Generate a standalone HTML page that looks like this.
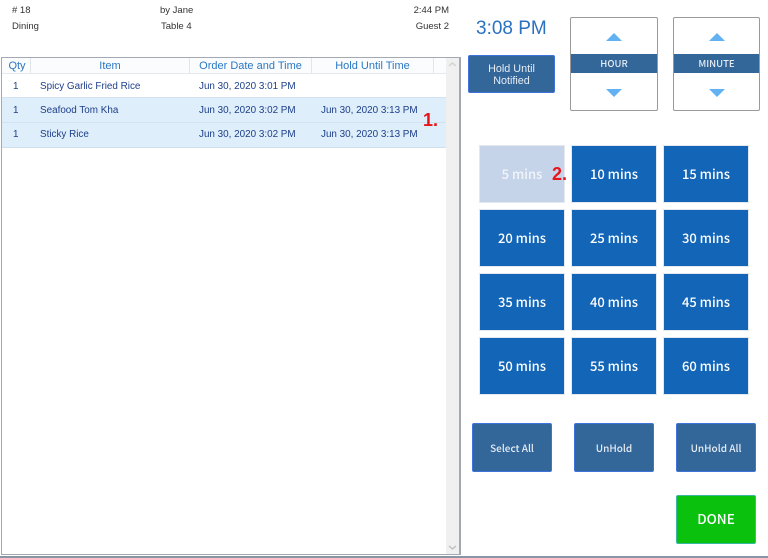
<!DOCTYPE html>
<html><head><meta charset="utf-8"><style>
html,body{margin:0;padding:0;width:768px;height:558px;overflow:hidden;background:#fff}
body{position:relative;font-family:"Liberation Sans",sans-serif}
.a{position:absolute;white-space:nowrap}
.t{font-size:9.5px;color:#333;line-height:12px}
.h{font-size:11px;color:#2a78c4;line-height:14px;top:59px;text-align:center}
.c{font-size:9.9px;color:#1d3f8a;line-height:12px}
.sep{position:absolute;top:58px;width:1px;height:15px;background:#e2e6ea}
.b{position:absolute;box-sizing:border-box;display:flex;align-items:center;justify-content:center;text-align:center}
.m{width:84px;height:56px;background:#1265b7;color:#fff;font:500 13px/1 "Noto Sans CJK JP","Liberation Sans",sans-serif;box-shadow:0 0 0 1px #e3e8ef;padding-bottom:2px}
.s{background:#336699;border:1px solid #3f73dc;border-radius:2px;color:#e6edf5}
.g{font:500 10px/1 "Noto Sans CJK JP","Liberation Sans",sans-serif;width:80px;height:49px;top:423px}
.box{position:absolute;box-sizing:border-box;border:1px solid #999;border-radius:2px;background:#fff;top:17px;height:94px}
.bar{position:absolute;left:0;right:0;top:36px;height:19px;background:#336699;color:#e6edf5;font:500 9.5px/1 "Noto Sans CJK JP","Liberation Sans",sans-serif;display:flex;align-items:center;justify-content:center}
.up,.dn{position:absolute;left:50%;margin-left:-8px;width:0;height:0;border-left:8px solid transparent;border-right:8px solid transparent}
.up{top:15px;border-bottom:8px solid #62b1f2}
.dn{top:71px;border-top:8px solid #62b1f2}
.r{font:bold 18px/1 "Liberation Sans",sans-serif;color:#e8141c}
</style></head><body>

<div class="a t" style="left:12px;top:5px"># 18</div>
<div class="a t" style="left:160px;top:5px">by Jane</div>
<div class="a t" style="right:319px;top:5px">2:44 PM</div>
<div class="a t" style="left:12px;top:21px">Dining</div>
<div class="a t" style="left:161px;top:21px">Table 4</div>
<div class="a t" style="right:319px;top:21px">Guest 2</div>

<div class="a" style="left:1px;top:57px;width:460px;height:498px;box-sizing:border-box;border:1px solid #a3a8b2;border-right-width:2px;border-left-width:1px"></div>
<div class="a" style="left:446px;top:58px;width:13px;height:496px;background:#f0f0f0"></div>
<svg class="a" style="left:447px;top:60px" width="11" height="8"><path d="M2 6 L5.5 3 L9 6" fill="none" stroke="#d4d4d4" stroke-width="1.5"/></svg>
<svg class="a" style="left:447px;top:544px" width="11" height="8"><path d="M2 2 L5.5 5 L9 2" fill="none" stroke="#c4c4c4" stroke-width="1.5"/></svg>

<div class="a" style="left:2px;top:58px;width:444px;height:15px;background:#fbfcfd;border-bottom:1px solid #e6e9ed"></div>
<div class="sep" style="left:30px"></div><div class="sep" style="left:189px"></div><div class="sep" style="left:311px"></div><div class="sep" style="left:433px"></div>
<div class="a h" style="left:4px;width:26px">Qty</div>
<div class="a h" style="left:31px;width:158px">Item</div>
<div class="a h" style="left:190px;width:121px">Order Date and Time</div>
<div class="a h" style="left:312px;width:121px">Hold Until Time</div>

<div class="a" style="left:2px;top:97px;width:444px;height:25px;background:#deeefb;border-top:1px solid #d3e2f0"></div>
<div class="a" style="left:2px;top:122px;width:444px;height:24px;background:#deeefb;border-top:1px solid #d3e2f0;border-bottom:1px solid #cfdeec"></div>

<div class="a c" style="left:13px;top:81px">1</div>
<div class="a c" style="left:40px;top:81px">Spicy Garlic Fried Rice</div>
<div class="a c" style="left:199px;top:81px">Jun 30, 2020 3:01 PM</div>
<div class="a c" style="left:13px;top:105px">1</div>
<div class="a c" style="left:40px;top:105px">Seafood Tom Kha</div>
<div class="a c" style="left:199px;top:105px">Jun 30, 2020 3:02 PM</div>
<div class="a c" style="left:321px;top:105px">Jun 30, 2020 3:13 PM</div>
<div class="a c" style="left:13px;top:129px">1</div>
<div class="a c" style="left:40px;top:129px">Sticky Rice</div>
<div class="a c" style="left:199px;top:129px">Jun 30, 2020 3:02 PM</div>
<div class="a c" style="left:321px;top:129px">Jun 30, 2020 3:13 PM</div>
<div class="a r" style="left:423px;top:111px">1.</div>

<div class="a" style="left:476px;top:18px;font-size:19px;line-height:22px;color:#2a72c0">3:08 PM</div>
<div class="b s" style="left:468px;top:55px;width:87px;height:38px;font-size:10.8px;line-height:12px;padding-top:2px">Hold Until<br>Notified</div>

<div class="box" style="left:570px;width:88px"><div class="up"></div><div class="bar">HOUR</div><div class="dn"></div></div>
<div class="box" style="left:673px;width:87px"><div class="up"></div><div class="bar">MINUTE</div><div class="dn"></div></div>

<div class="b m" style="left:480px;top:146px;background:#c6d4ea;color:#f2f5fa">5 mins</div>
<div class="b m" style="left:572px;top:146px">10 mins</div>
<div class="b m" style="left:664px;top:146px">15 mins</div>
<div class="b m" style="left:480px;top:210px">20 mins</div>
<div class="b m" style="left:572px;top:210px">25 mins</div>
<div class="b m" style="left:664px;top:210px">30 mins</div>
<div class="b m" style="left:480px;top:274px">35 mins</div>
<div class="b m" style="left:572px;top:274px">40 mins</div>
<div class="b m" style="left:664px;top:274px">45 mins</div>
<div class="b m" style="left:480px;top:338px">50 mins</div>
<div class="b m" style="left:572px;top:338px">55 mins</div>
<div class="b m" style="left:664px;top:338px">60 mins</div>
<div class="a r" style="left:552px;top:165px">2.</div>

<div class="b s g" style="left:472px">Select All</div>
<div class="b s g" style="left:574px">UnHold</div>
<div class="b s g" style="left:676px">UnHold All</div>
<div class="b" style="left:676px;top:495px;width:80px;height:49px;background:#0ac20e;border:1px solid #39b7a0;border-radius:2px;color:#fff;font:500 13.5px/1 'Noto Sans CJK JP','Liberation Sans',sans-serif;padding-bottom:2px">DONE</div>

<div class="a" style="left:0;top:556px;width:768px;height:2px;background:#8a94a3"></div>
</body></html>
